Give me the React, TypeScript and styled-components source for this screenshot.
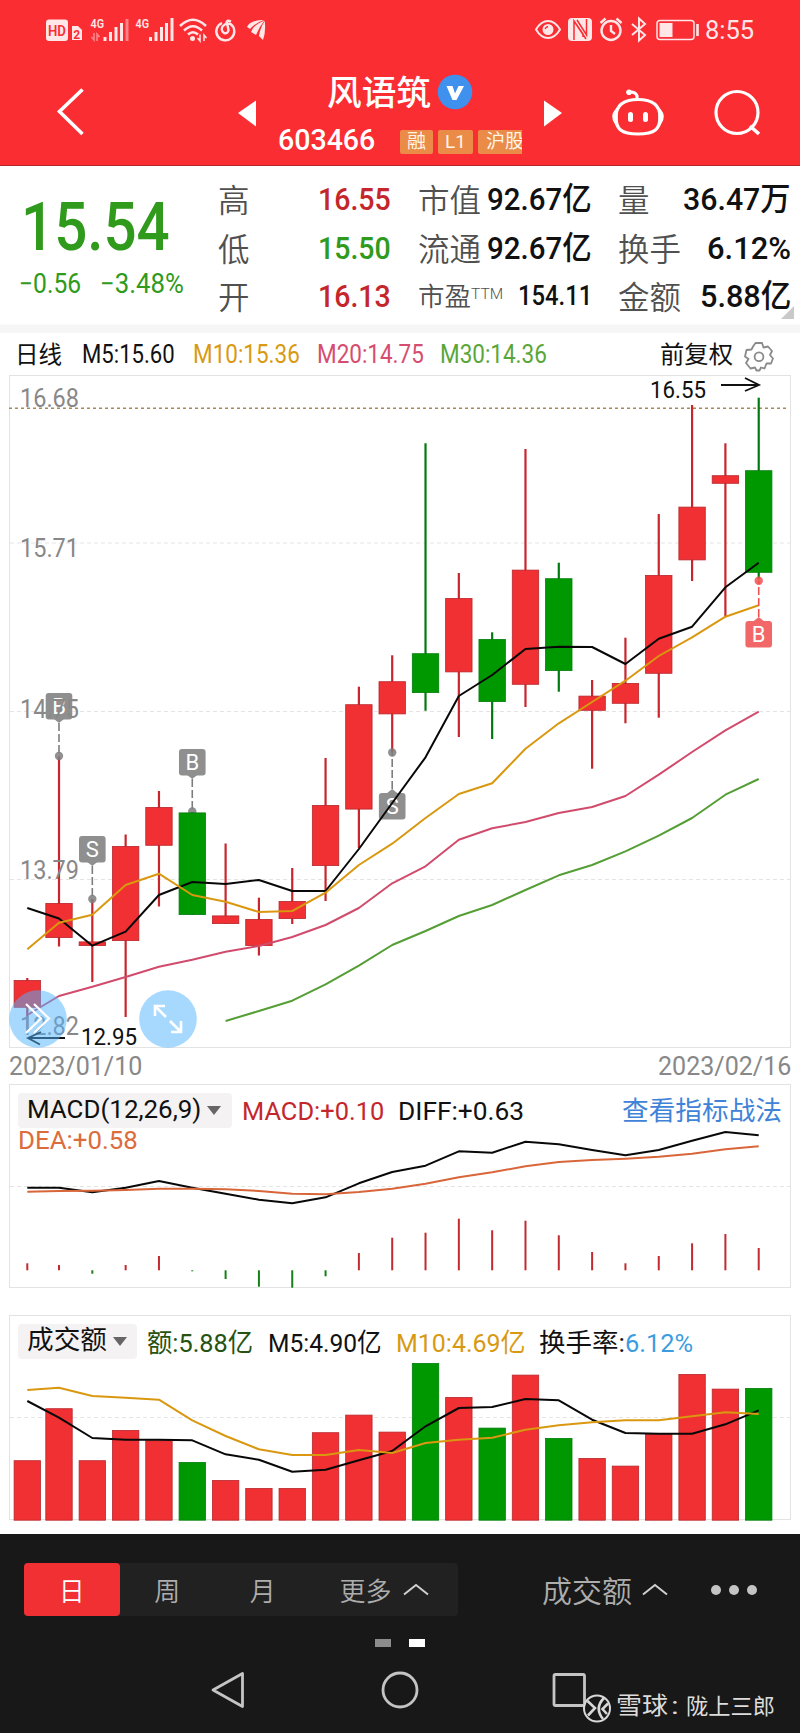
import React, { useLayoutEffect, useRef, useState } from "react";
import styled, { createGlobalStyle } from "styled-components";

const CJK = `"Noto Sans CJK SC", sans-serif`;
const FONT = `Roboto, ${CJK}`;
const RED = "#f03032";
const GREEN = "#009800";

const GlobalStyle = createGlobalStyle`
  * { box-sizing: border-box; }
  body { margin: 0; background: #fff; font-family: ${FONT}; }
  svg { display: block; flex: none; overflow: visible; }
`;

/* ---------- condensed text fitted to a slot ---------- */

const Slot = styled.span<{ $w: number; $ml?: number }>`
  display: inline-block;
  flex: none;
  width: ${(p) => p.$w}px;
  margin-left: ${(p) => p.$ml ?? 0}px;
  white-space: nowrap;
`;
const Glyphs = styled.span<{ $size: number; $color: string; $weight: number }>`
  display: inline-block;
  transform-origin: 0 50%;
  font-size: ${(p) => p.$size}px;
  font-weight: ${(p) => p.$weight};
  color: ${(p) => p.$color};
`;
const Thin = styled.span`
  font-weight: 400;
`;

type FitProps = {
  w: number;
  size: number;
  color?: string;
  weight?: number;
  ml?: number;
  children: React.ReactNode;
};

function Fit({ w, size, color = "#111", weight = 500, ml, children }: FitProps) {
  const ref = useRef<HTMLSpanElement>(null);
  const [scale, setScale] = useState(1);
  useLayoutEffect(() => {
    if (ref.current) setScale(w / ref.current.offsetWidth);
  }, [w, size, weight]);
  return (
    <Slot $w={w} $ml={ml}>
      <Glyphs ref={ref} $size={size} $color={color} $weight={weight} style={{ transform: `scaleX(${scale})` }}>
        {children}
      </Glyphs>
    </Slot>
  );
}

/* ---------- layout ---------- */

const Screen = styled.main`
  width: 800px;
  height: 1733px;
  display: flex;
  flex-direction: column;
  overflow: hidden;
  background: #fff;
`;

const Header = styled.header`
  height: 166px;
  flex: none;
  background: #fa2d33;
  border-bottom: 1px solid #b5262b;
`;
const StatusBar = styled.div`
  height: 60px;
  display: flex;
  align-items: center;
  justify-content: space-between;
  padding: 0 46px 0 44px;
`;
const StatusGroup = styled.div`
  display: flex;
  align-items: center;
`;
const TitleBar = styled.div`
  height: 105px;
  display: flex;
  align-items: center;
`;
const BackArrow = styled.div`
  width: 232px;
  padding-left: 54px;
`;
const TitleBlock = styled.div`
  width: 278px;
  padding-left: 16px;
  height: 105px;
`;
const NameRow = styled.div`
  height: 57px;
  padding: 8px 0 0 49px;
  display: flex;
  align-items: center;
  gap: 6px;
  line-height: 44px;
`;
const BadgeIcon = styled.div`
  padding-bottom: 1px;
`;
const NameText = styled.div`
  padding-top: 7px;
`;
const CodeRow = styled.div`
  display: flex;
  align-items: center;
  height: 40px;
  padding-top: 2px;
  margin-top: 4px;
  line-height: 40px;
`;
const Tags = styled.div`
  margin-left: 25px;
  width: 122px;
  display: flex;
  gap: 5px;
  overflow: hidden;
`;
const Tag = styled.span<{ $w: number }>`
  flex: none;
  width: ${(p) => p.$w}px;
  height: 24px;
  line-height: 24px;
  border-radius: 2px;
  background: #ea8b48;
  color: #fff4e6;
  font-size: 19px;
  text-align: center;
`;

const Quote = styled.section`
  flex: none;
  height: 159px;
  display: flex;
  position: relative;
  border-bottom: 1px solid #fafafa;
`;
const PricePane = styled.div`
  width: 218px;
  padding: 19px 0 0 19px;
`;
const Price = styled.div`
  height: 83px;
  line-height: 84px;
  padding-left: 2px;
`;
const Change = styled.div`
  height: 32px;
  line-height: 32px;
  display: flex;
`;
const Column = styled.div<{ $w: number; $mr: number }>`
  width: ${(p) => p.$w}px;
  margin-right: ${(p) => p.$mr}px;
  padding-top: 9px;
`;
const Stat = styled.div`
  height: 48.5px;
  line-height: 48px;
  display: flex;
  justify-content: space-between;
`;
const StatLabel = styled.span<{ $size?: number }>`
  font-family: ${CJK};
  font-size: ${(p) => p.$size ?? 31.5}px;
  line-height: 46px;
  font-weight: 350;
  color: #505050;
  white-space: nowrap;
`;
const Sup = styled.span`
  font-family: Roboto, sans-serif;
  font-size: 15.5px;
  position: relative;
  top: -7px;
`;
const Corner = styled.i`
  position: absolute;
  right: 6px;
  bottom: 5px;
  border: solid transparent;
  border-width: 0 0 13px 13px;
  border-bottom-color: #c9c9c9;
`;
const Band = styled.div`
  flex: none;
  height: 8px;
  background: #f6f6f6;
`;
const Legend = styled.div`
  flex: none;
  height: 42px;
  line-height: 40px;
  padding: 4px 0 0 15px;
  display: flex;
  align-items: center;
`;
const Dates = styled.div`
  flex: none;
  height: 36px;
  line-height: 37px;
  padding: 0 9px;
  display: flex;
  justify-content: space-between;
`;
const Panel = styled.section<{ $h: number; $mb: number }>`
  flex: none;
  display: grid;
  height: ${(p) => p.$h}px;
  margin-bottom: ${(p) => p.$mb}px;
  > * { grid-area: 1 / 1; }
`;
const PanelHead = styled.div`
  padding: 9px 0 0 18px;
  z-index: 1;
`;
const HeadRow = styled.div<{ $lh?: number }>`
  display: flex;
  height: 35px;
  line-height: ${(p) => p.$lh ?? 36}px;
`;
const SubRow = styled.div`
  height: 26px;
  line-height: 24px;
`;
const Pill = styled.div<{ $w: number }>`
  width: ${(p) => p.$w}px;
  flex: none;
  padding-left: 9px;
  display: flex;
  align-items: center;
  gap: 6px;
  border-radius: 4px;
  background: #f4f2f3;
`;
const Caret = styled.i`
  border: solid transparent;
  border-width: 9px 7px 0;
  border-top-color: #666;
`;

const Footer = styled.footer`
  flex: none;
  height: 199px;
  background: #181818;
  position: relative;
`;
const TabRow = styled.div`
  padding: 29px 0 0 24px;
  display: flex;
  align-items: center;
`;
const Segments = styled.div`
  width: 434px;
  height: 53px;
  display: flex;
  border-radius: 4px;
  background: #212121;
`;
const Tab = styled.div<{ $active?: boolean; $w?: number }>`
  width: ${(p) => p.$w ?? 95.5}px;
  display: flex;
  align-items: center;
  justify-content: center;
  gap: 11px;
  border-radius: 4px;
  background: ${(p) => (p.$active ? RED : "transparent")};
  color: ${(p) => (p.$active ? "#fff" : "#adadad")};
  font: 350 26px ${CJK};
`;
const Indicator = styled.div`
  display: flex;
  align-items: center;
  gap: 10px;
  margin-left: 84px;
  color: #adadad;
  font: 350 30px/53px ${CJK};
`;
const Dots = styled.div`
  display: flex;
  gap: 8px;
  margin-left: 43px;
  > i { width: 10px; height: 10px; border-radius: 50%; background: #c4c4c4; }
`;
const Pager = styled.div`
  display: flex;
  gap: 18px;
  padding: 23px 0 0 375px;
`;
const Page = styled.i<{ $on?: boolean }>`
  width: 16px;
  height: 8px;
  background: ${(p) => (p.$on ? "#fff" : "#8c8c8c")};
`;
const NavBar = styled.div`
  display: flex;
  align-items: center;
  gap: 133.5px;
  padding: 23px 0 0 209px;
`;
const Credit = styled.div`
  position: absolute;
  left: 582px;
  top: 156px;
  display: flex;
  align-items: center;
  line-height: 32px;
`;

/* ---------- data ---------- */

const cx = (i: number) => (i === 0 ? 27.3 : 59 + 33.32 * (i - 1));

/* [up, high, bodyTop, bodyBottom, low] */
const candles: [number, number, number, number, number][] = [
  [1, 978, 980, 1007.7, 1029], [1, 756.5, 903, 938, 946.5], [1, 899, 941.5, 946, 982],
  [1, 834.5, 846, 941, 1017], [1, 791, 807, 845.7, 906.5], [0, 812.5, 812.5, 915, 915],
  [1, 843.5, 915.5, 924, 924], [1, 897.7, 919, 946, 955.5], [1, 868, 901, 919, 924],
  [1, 758, 805, 866, 901], [1, 686.7, 704.3, 809.5, 848], [1, 655.3, 681.3, 714.3, 752.5],
  [0, 443.3, 653.3, 693, 710.7], [1, 573, 598, 672.3, 737], [0, 632.3, 639, 702, 739],
  [1, 449, 569.7, 684.7, 707], [0, 562.7, 578.3, 671, 691.7], [1, 680, 695.7, 710.7, 768.7],
  [1, 637.7, 683, 703.7, 723.3], [1, 514, 575, 673.7, 717.7], [1, 405, 506.7, 560.3, 581],
  [1, 443.3, 475.3, 483.7, 617], [0, 397.7, 470.3, 572.7, 579.3],
];
const ma5 = [908, 918.5, 945.7, 931.7, 895, 882, 884, 880, 891, 891, 849, 803, 757.3, 696, 675, 649, 646.7, 647, 664, 638.7, 626.7, 587.3, 562.7];
const ma10 = [949.3, 922.7, 914.7, 885, 873.7, 895, 901.7, 912, 911, 892.7, 865, 843.7, 818, 794, 783.3, 748.7, 723.3, 702, 680.7, 656, 637.3, 616.7, 605.3];
const ma20 = [1015, 996, 986.7, 977, 966.7, 959.7, 951.7, 946, 937, 925, 908, 883.3, 866.3, 839.7, 828.3, 822, 813, 807, 796, 774.7, 752, 730.3, 711.7];
const ma30 = [1021, 1011, 1000.7, 984.3, 965.7, 945, 931, 916, 905, 890, 875.3, 865, 851.3, 835.7, 818, 794.7, 779];

const diff = [1187.7, 1187.7, 1192.3, 1187.7, 1181, 1187.7, 1193.7, 1199.7, 1203.3, 1197.3, 1183.3, 1172, 1165.7, 1151.3, 1152.7, 1141.7, 1144.3, 1150, 1155.3, 1150, 1140.7, 1132, 1135.3];
const dea = [1191.7, 1191, 1190.7, 1190, 1188.7, 1188.7, 1189.3, 1191, 1193.7, 1194.3, 1192, 1188.7, 1183.7, 1177.3, 1172.3, 1166.3, 1162, 1160, 1158.7, 1156.7, 1153.7, 1149.3, 1146.3];
const hist = [1263.3, 1265, 1273.7, 1265, 1256, 1271.3, 1279, 1286.7, 1287.7, 1276.3, 1253, 1237.7, 1232.7, 1218.7, 1230.3, 1220.7, 1235.3, 1252, 1263.3, 1256, 1243.3, 1234, 1248];

const volume = [1460.3, 1408.3, 1460.3, 1430, 1440.3, 1462, 1480, 1488, 1488, 1432.3, 1414.7, 1431.7, 1363, 1397, 1427.7, 1374.7, 1438, 1458, 1465.7, 1434, 1374, 1388.7, 1388];
const vol5 = [1401, 1417.7, 1438, 1439.7, 1439.7, 1440.3, 1454.3, 1459.7, 1471.7, 1469.7, 1460.3, 1451, 1426.3, 1408, 1407, 1399, 1400.3, 1419.7, 1433, 1433.7, 1433.7, 1424.3, 1410.3];
const vol10 = [1390, 1387.7, 1396, 1397.7, 1399.7, 1420.3, 1436, 1449.3, 1455, 1455, 1450, 1453, 1443, 1439.7, 1437.7, 1429.7, 1425.3, 1422.3, 1420.3, 1420.3, 1416.3, 1412.3, 1414];

/* ---------- chart parts ---------- */

function Line({ ys, color, from = 0 }: { ys: number[]; color: string; from?: number }) {
  return (
    <polyline
      points={ys.map((y, i) => `${cx(i + from)},${y}`).join(" ")}
      fill="none" stroke={color} strokeWidth="2" strokeLinejoin="round"
    />
  );
}

const GridLine = ({ y }: { y: number }) => (
  <line x1="10" x2="790" y1={y} y2={y} stroke="#e4e4e4" strokeDasharray="4 3" />
);

function AxisText({ x, y, w, size = 25.5, color = "#888", children }: { x: number; y: number; w: number; size?: number; color?: string; children: string }) {
  return (
    <text x={x} y={y} fontSize={size} fill={color} fontFamily="Roboto" textLength={w} lengthAdjust="spacingAndGlyphs">
      {children}
    </text>
  );
}

function Marker({ i, box, dot, color = "#7d7d7d", letter }: { i: number; box: number; dot: number; color?: string; letter: string }) {
  const x = cx(i);
  const above = box < dot;
  const tip = above ? box + 30 : box - 4;
  const edge = above ? box + 26 : box;
  return (
    <g>
      <circle cx={x} cy={dot} r="4.2" fill={color} opacity=".85" />
      <line x1={x} x2={x} y1={tip} y2={dot} stroke={color} strokeWidth="1.6" strokeDasharray="8 3" />
      <g opacity=".86">
        <rect x={x - 13.3} y={box} width="26.6" height="26.6" rx="3" fill={color} />
        <path d={`M${x - 5} ${edge}L${x} ${tip}L${x + 5} ${edge}Z`} fill={color} />
      </g>
      <text x={x} y={box + 21} textAnchor="middle" fontFamily="Roboto" fontSize="22" fontWeight="450" fill="#fff">{letter}</text>
    </g>
  );
}

function PriceChart() {
  return (
    <svg width="800" height="673" viewBox="0 375 800 673">
      <rect x="9.5" y="375.5" width="781" height="672" fill="#fff" stroke="#e3e3e3" />
      {[543, 711.5, 879.5].map((y) => <GridLine key={y} y={y} />)}
      <line x1="9" x2="789" y1="408.2" y2="408.2" stroke="#a68a58" strokeWidth="1.6" strokeDasharray="3 3" />
      <Marker i={5} box={749} dot={811.5} letter="B" />
      {candles.map(([up, high, top, bottom, low], i) => (
        <g key={i}>
          <line x1={cx(i)} x2={cx(i)} y1={high} y2={low} stroke={up ? "#c8262c" : "#007a10"} strokeWidth="2.2" />
          <rect x={cx(i) - 13.2} y={top + 0.4} width="26.4" height={bottom - top - 0.8} fill={up ? RED : GREEN} stroke={up ? "#b8272c" : "#007d0a"} strokeWidth=".8" />
        </g>
      ))}
      <Marker i={1} box={693} dot={756} letter="B" />
      <Marker i={2} box={836} dot={899} letter="S" />
      <Marker i={11} box={793} dot={752.5} letter="S" />
      <AxisText x={20} y={406.5} w={59}>16.68</AxisText>
      <AxisText x={20} y={556.5} w={59}>15.71</AxisText>
      <AxisText x={20} y={717.5} w={59}>14.75</AxisText>
      <AxisText x={20} y={879} w={59}>13.79</AxisText>
      <AxisText x={20} y={1034.5} w={59}>12.82</AxisText>
      <Line ys={ma5} color="#080808" />
      <Line ys={ma10} color="#d9980f" />
      <Line ys={ma20} color="#d14b6c" />
      <Line ys={ma30} color="#559e35" from={6} />
      <Marker i={22} box={621} dot={580.7} color="#f05050" letter="B" />
      <AxisText x={650} y={397.7} w={56} size={23} color="#111">16.55</AxisText>
      <path d="M721 385H759M745 378L759 385L745 391" fill="none" stroke="#111" strokeWidth="1.8" />
      <AxisText x={81} y={1045} w={56} size={23} color="#111">12.95</AxisText>
      <path d="M65 1038H28M41 1032L28 1038L40 1044.5" fill="none" stroke="#111" strokeWidth="1.8" />
      <circle cx="38" cy="1019" r="28.8" fill="#50b4ff" fillOpacity=".5" />
      <path d="M26 1004L41 1018.5L26 1033M34 1004L49 1018.5L34 1033" fill="none" stroke="#fff" strokeWidth="2.2" />
      <circle cx="168" cy="1019" r="28.8" fill="#50b4ff" fillOpacity=".5" />
      <path d="M155 1016V1006H165M155 1006L166 1017M181 1021V1032H171M181 1032L170 1021" fill="none" stroke="#fff" strokeWidth="2.6" />
    </svg>
  );
}

function MacdChart() {
  return (
    <svg width="800" height="204" viewBox="0 1084 800 204">
      <rect x="9.5" y="1084.5" width="781" height="203" fill="#fff" stroke="#e3e3e3" />
      <GridLine y={1186.5} />
      {hist.map((y, i) => (
        <line key={i} x1={cx(i)} x2={cx(i)} y1={1270.3} y2={y} stroke={y < 1270 ? "#c22a30" : "#158015"} strokeWidth="2" />
      ))}
      <Line ys={diff} color="#080808" />
      <Line ys={dea} color="#d8663a" />
    </svg>
  );
}

function VolumeChart() {
  return (
    <svg width="800" height="206" viewBox="0 1315 800 206">
      <rect x="9.5" y="1315.5" width="781" height="204" fill="#fff" stroke="#e3e3e3" />
      <GridLine y={1417.5} />
      {volume.map((y, i) => {
        const up = candles[i][0];
        return <rect key={i} x={cx(i) - 13.2} y={y + 0.4} width="26.4" height={1519.8 - y} fill={up ? RED : GREEN} stroke={up ? "#b8272c" : "#007d0a"} strokeWidth=".8" />;
      })}
      <Line ys={vol5} color="#080808" />
      <Line ys={vol10} color="#d9980f" />
    </svg>
  );
}

/* ---------- status bar icons ---------- */

const P = "#ffe6e7";

function LeftStatusIcons() {
  return (
    <svg width="224" height="28" viewBox="44 16 224 28" fill="none" stroke={P} strokeWidth="2">
      <rect x="46" y="19.5" width="22" height="21.5" rx="3" fill={P} stroke="none" />
      <text x="57" y="35.500" textAnchor="middle" fontFamily="Roboto" fontWeight="600" fontSize="14.5" textLength="18" lengthAdjust="spacingAndGlyphs" fill="#fa2d33" stroke="none">HD</text>
      <path d="M72 26H78L82 30V40H72Z" fill={P} stroke="none" />
      <text x="76.8" y="38.500" textAnchor="middle" fontFamily="Roboto" fontWeight="700" fontSize="12" fill="#fa2d33" stroke="none">2</text>
      {[90.5, 135.5].map((x) => (
        <text key={x} x={x} y="28" fontFamily="Roboto" fontWeight="600" fontSize="13.5" textLength="13.5" lengthAdjust="spacingAndGlyphs" fill={P} stroke="none">4G</text>
      ))}
      <g strokeWidth="3">
        <path d="M105 41V37M110.5 41V32M116 41V27M121.5 41V23" />
        <path d="M127 41V19" opacity=".45" />
        <path d="M150.500 41V37M156 41V32M161.500 41V27M166.500 41V23M172 41V18" />
      </g>
      <path d="M94 33V40L91.500 37M97 41V34L99.500 37" strokeWidth="1.500" opacity=".5" />
      <g strokeWidth="2.6">
        <path d="M180 26Q193 13.500 206 26" />
        <path d="M184 30.500Q193 22 202 30.500" />
        <path d="M188 34.500Q193 30 198 34.500" />
      </g>
      <circle cx="192.5" cy="38.500" r="2.500" fill={P} stroke="none" />
      <path d="M200 34.500V41L197.500 38M204 41V35L206.500 38" strokeWidth="1.500" />
      <path d="M222 23A9 9 0 1 0 230.500 24Q226 22.500 222.500 26.500Q220.500 30.500 224 33Q228 34 228.500 30Q228 26 226.500 22.500Q227 19.500 231 21.500" strokeWidth="2.4" />
      <path d="M247 27Q250 20 264 20Q255 23 250 29ZM251 32Q253 25 264.500 20.500Q259 27 256 35ZM259 36Q260 28 264.800 21Q266 32 263 40Z" fill={P} stroke="none" />
    </svg>
  );
}

function RightStatusIcons() {
  return (
    <svg width="166" height="28" viewBox="534 16 166 28" fill="none" stroke={P} strokeWidth="2">
      <path d="M536 29.500Q541 21 548 21T560 29.500Q555 38 548 38T536 29.500Z" />
      <circle cx="548" cy="29.500" r="4.500" fill={P} />
      <path d="M545 29Q546 27 548 26.500" stroke="#fa2d33" strokeWidth="1.300" />
      <rect x="568" y="18" width="24" height="23" rx="4" fill={P} stroke="none" />
      <path d="M574 40V21L583 34V37M577 20L586.500 35V19M574 21L586 39" stroke="#fa2d33" strokeWidth="1.500" />
      <circle cx="611" cy="30.500" r="9.500" strokeWidth="2.400" />
      <path d="M611 25V31L615 34M600.500 23L605.500 18.500M621.500 23L616.500 18.500" strokeWidth="2.400" />
      <path d="M632 24L645 35L639 40.500V18.500L645 24L632 35" />
      <rect x="657" y="20.500" width="37" height="19" rx="3" strokeWidth="1.500" />
      <rect x="659.5" y="23" width="13" height="14" fill={P} stroke="none" />
      <path d="M697.500 24V36" strokeWidth="2.600" />
    </svg>
  );
}

/* ---------- sections ---------- */

function AppHeader() {
  return (
    <Header>
      <StatusBar>
        <StatusGroup><LeftStatusIcons /></StatusGroup>
        <StatusGroup>
          <RightStatusIcons />
          <Fit w={49} size={26} color={P} weight={400} ml={5}>8:55</Fit>
        </StatusGroup>
      </StatusBar>
      <TitleBar>
        <BackArrow>
          <svg width="34" height="52" viewBox="54 87 34 52" fill="none" stroke="#fff" strokeWidth="3.600"><path d="M82.500 89.500L59.500 111.500L82.500 134" /></svg>
        </BackArrow>
        <svg width="30" height="30" viewBox="232 98 30 30"><path d="M238 113L256 100.500V126.500Z" fill="#fff" /></svg>
        <TitleBlock>
          <NameRow>
            <NameText><Fit w={104} size={34} color="#fff">风语筑</Fit></NameText>
            <BadgeIcon>
              <svg width="36" height="36" viewBox="0 0 36 36">
                <circle cx="18" cy="18" r="17.300" fill="#4090ee" />
                <path d="M9.500 12H15.500L18 19.500L21.500 12H27L19.500 26H15.500Z" fill="#fff" />
              </svg>
            </BadgeIcon>
          </NameRow>
          <CodeRow>
            <Fit w={97} size={30} color="#fff">603466</Fit>
            <Tags><Tag $w={33}>融</Tag><Tag $w={35}>L1</Tag><Tag $w={54}>沪股</Tag></Tags>
          </CodeRow>
        </TitleBlock>
        <svg width="30" height="30" viewBox="540 98 30 30"><path d="M562 113L544 100.500V126.500Z" fill="#fff" /></svg>
        <svg width="230" height="60" viewBox="570 83 230 60" fill="none" stroke="#fff" strokeWidth="3.200">
          <path d="M638 99.500C655 99.500 660 107 660 117C660 129 655 134 638 134C621 134 616 129 616 117C616 107 621 99.500 638 99.500Z" />
          <path d="M637 99V96Q636 92 630 92" />
          <circle cx="629" cy="92.300" r="2.800" fill="#fff" stroke="none" />
          <path d="M616 111Q611.500 116 616 123ZM660 111Q664.500 116 660 123Z" fill="#fff" />
          <path d="M630.500 114.500V119.500M645.500 114.500V119.500" strokeWidth="5" strokeLinecap="round" />
          <circle cx="737" cy="112.500" r="21" />
          <path d="M750 126L759 134" strokeWidth="3.600" />
        </svg>
      </TitleBar>
    </Header>
  );
}

const PRICE_GREEN = "#2f9a1c";
const PRICE_RED = "#c4262c";

function QuoteBoard() {
  return (
    <Quote>
      <PricePane>
        <Price><Fit w={149} size={66.5} color={PRICE_GREEN}>15.54</Fit></Price>
        <Change>
          <Fit w={62} size={27} color={PRICE_GREEN} weight={450}>−0.56</Fit>
          <Fit w={84} size={27} color={PRICE_GREEN} weight={450} ml={19}>−3.48%</Fit>
        </Change>
      </PricePane>
      <Column $w={173} $mr={27}>
        <Stat><StatLabel>高</StatLabel><Fit w={73} size={32} color={PRICE_RED}>16.55</Fit></Stat>
        <Stat><StatLabel>低</StatLabel><Fit w={73} size={32} color={PRICE_GREEN}>15.50</Fit></Stat>
        <Stat><StatLabel>开</StatLabel><Fit w={73} size={32} color={PRICE_RED}>16.13</Fit></Stat>
      </Column>
      <Column $w={174} $mr={26}>
        <Stat><StatLabel>市值</StatLabel><Fit w={105} size={32}>92.67亿</Fit></Stat>
        <Stat><StatLabel>流通</StatLabel><Fit w={105} size={32}>92.67亿</Fit></Stat>
        <Stat><StatLabel $size={26.5}>市盈<Sup>TTM</Sup></StatLabel><Fit w={74} size={28}>154.11</Fit></Stat>
      </Column>
      <Column $w={173} $mr={0}>
        <Stat><StatLabel>量</StatLabel><Fit w={108} size={32}>36.47万</Fit></Stat>
        <Stat><StatLabel>换手</StatLabel><Fit w={84} size={32}>6.12%</Fit></Stat>
        <Stat><StatLabel>金额</StatLabel><Fit w={91} size={32}>5.88亿</Fit></Stat>
      </Column>
      <Corner />
    </Quote>
  );
}

export default function App() {
  return (
    <Screen>
      <GlobalStyle />
      <AppHeader />
      <QuoteBoard />
      <Band />
      <Legend>
        <Fit w={47} size={23.5} weight={400}>日线</Fit>
        <Fit w={93} size={25} weight={450} ml={20}><Thin>M</Thin>5:15.60</Fit>
        <Fit w={107} size={25} weight={450} ml={18} color="#d89a12"><Thin>M</Thin>10:15.36</Fit>
        <Fit w={107} size={25} weight={450} ml={17} color="#d54e70"><Thin>M</Thin>20:14.75</Fit>
        <Fit w={107} size={25} weight={450} ml={16} color="#5aa63a"><Thin>M</Thin>30:14.36</Fit>
        <Fit w={73} size={24} ml={113} weight={400}>前复权</Fit>
        <svg width="51" height="34" viewBox="733 338 51 34" fill="none" stroke="#8a8a8a" strokeWidth="1.800" strokeLinejoin="round">
          <path d="M755.500 342H762L763.500 346.500L768 345.500L772 350L770 354L773 357.500L771 362.500H766.500L764.500 367.500L761 366.500L759.500 369.500H756.500L755 366.500L750.500 367.500L746 362L748.500 358L745 355.500L746.500 349L751.500 348.500L753 345.500Z" />
          <circle cx="759" cy="355.800" r="4.400" />
        </svg>
      </Legend>
      <PriceChart />
      <Dates>
        <Fit w={133} size={26} weight={400} color="#888">2023/01/10</Fit>
        <Fit w={133} size={26} weight={400} color="#888">2023/02/16</Fit>
      </Dates>
      <Panel $h={203} $mb={28}>
        <MacdChart />
        <PanelHead>
          <HeadRow>
            <Pill $w={214}><Fit w={174} size={26.5} weight={400}>MACD(12,26,9)</Fit><Caret /></Pill>
            <Fit w={142} size={26.5} weight={400} ml={10} color={PRICE_RED}>MACD:+0.10</Fit>
            <Fit w={126} size={26.5} weight={400} ml={14}>DIFF:+0.63</Fit>
            <Fit w={160} size={26.5} weight={400} ml={98} color="#3f83d8">查看指标战法</Fit>
          </HeadRow>
          <SubRow><Fit w={120} size={26.5} weight={400} color="#dd6c3c">DEA:+0.58</Fit></SubRow>
        </PanelHead>
      </Panel>
      <Panel $h={206} $mb={13}>
        <VolumeChart />
        <PanelHead>
          <HeadRow $lh={38}>
            <Pill $w={119}><Fit w={80} size={26} weight={400}>成交额</Fit><Caret /></Pill>
            <Fit w={106} size={26.5} weight={450} ml={10} color="#265312"><Thin>额:</Thin>5.88<Thin>亿</Thin></Fit>
            <Fit w={114} size={26.5} weight={450} ml={15}><Thin>M</Thin>5:4.90<Thin>亿</Thin></Fit>
            <Fit w={130} size={26.5} weight={450} ml={14} color="#d89a12"><Thin>M</Thin>10:4.69<Thin>亿</Thin></Fit>
            <Fit w={86} size={26.5} weight={400} ml={13}>换手率:</Fit>
            <Fit w={68} size={26.5} weight={450} color="#3b9de0">6.12%</Fit>
          </HeadRow>
        </PanelHead>
      </Panel>
      <Footer>
        <TabRow>
          <Segments>
            <Tab $active>日</Tab>
            <Tab>周</Tab>
            <Tab>月</Tab>
            <Tab $w={147}>
              更多
              <svg width="26" height="13" fill="none" stroke="#d0d0d0" strokeWidth="2"><path d="M1 11.500L13 2L25 11.500" /></svg>
            </Tab>
          </Segments>
          <Indicator>
            成交额
            <svg width="26" height="13" fill="none" stroke="#d0d0d0" strokeWidth="2"><path d="M1 11.500L13 2L25 11.500" /></svg>
          </Indicator>
          <Dots><i /><i /><i /></Dots>
        </TabRow>
        <Pager><Page /><Page $on /></Pager>
        <NavBar>
          <svg width="38" height="40" viewBox="210 1670 38 40" fill="none" stroke="#c4c4c4" strokeWidth="2.800" strokeLinejoin="round"><path d="M214 1690L243.500 1673.500V1706.500Z" /></svg>
          <svg width="38" height="40" viewBox="381 1670 38 40" fill="none" stroke="#c4c4c4" strokeWidth="2.800"><circle cx="400" cy="1690" r="17" /></svg>
          <svg width="38" height="40" viewBox="553 1670 38 40" fill="none" stroke="#c4c4c4" strokeWidth="2.800"><rect x="555" y="1674.500" width="30.500" height="31" rx="1.500" /></svg>
        </NavBar>
        <Credit>
          <svg width="30" height="32" viewBox="583 1690 30 32" fill="none" stroke="#d8d8d8" strokeWidth="2">
            <circle cx="598" cy="1706.500" r="13" fill="#181818" fillOpacity=".5" />
            <path d="M588.500 1699L596 1706L589 1713.500M605 1696Q595 1706 604 1717M609 1701.500L603.500 1707L608 1712" strokeWidth="2.600" />
          </svg>
          <Fit w={52} size={24} ml={4} weight={400} color="#dcdcdc">雪球</Fit>
          <Fit w={8} size={24} ml={3} weight={400} color="#dcdcdc">:</Fit>
          <Fit w={89} size={22} ml={7} weight={400} color="#dcdcdc">陇上三郎</Fit>
        </Credit>
      </Footer>
    </Screen>
  );
}
